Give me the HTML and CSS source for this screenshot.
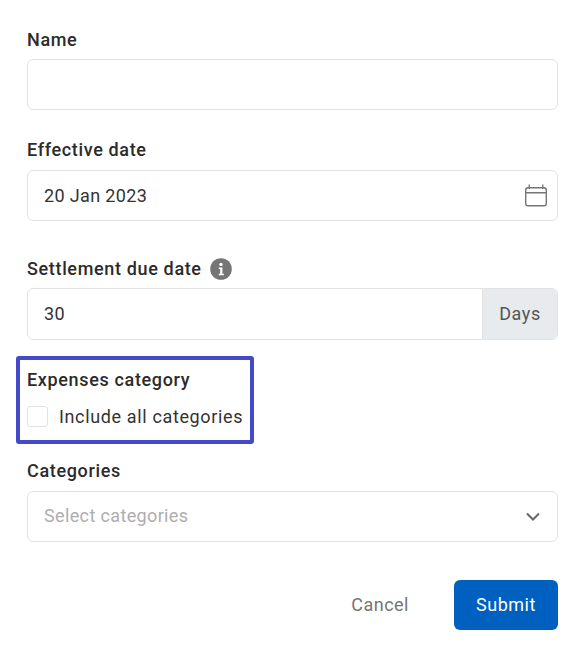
FILE: index.html
```html
<!DOCTYPE html>
<html lang="en">

<head>
    <meta charset="UTF-8">
    <meta name="viewport" content="width=device-width, initial-scale=1.0">
    <title>Expense policy</title>
    <link rel="stylesheet" href="styles.css">
</head>

<body>
    <form id="form">
        <div class="field name-field">
            <label>Name</label>
            <div class="control"></div>
        </div>

        <div class="field date-field">
            <label>Effective date</label>
            <div class="control">
                <span class="value">20 Jan 2023</span>
                <svg class="calendar" width="24" height="24" viewBox="0 0 24 24" fill="none" stroke="#757575" stroke-width="1.4">
                    <rect x="2.7" y="3.7" width="20.6" height="18.1" rx="2.2"></rect>
                    <path d="M2.7 8.8h20.6M6.3 0.5v4.5M19.7 0.5v4.5"></path>
                </svg>
            </div>
        </div>

        <div class="field due-field">
            <label>Settlement due date
                <svg class="info" width="22" height="22" viewBox="0 0 22 22">
                    <circle cx="11" cy="11" r="10.8" fill="#757575"></circle>
                    <circle cx="11" cy="6.4" r="1.7" fill="#fff"></circle>
                    <path d="M8.8 9.4h3.6v6.4h1.4v1.5H8.8v-1.5h1.4v-4.9H8.8z" fill="#fff"></path>
                </svg>
            </label>
            <div class="control with-addon">
                <span class="value">30</span>
                <span class="addon">Days</span>
            </div>
        </div>

        <!-- highlighted section -->
        <div class="highlight">
            <label>Expenses category</label>
            <div class="check-row">
                <span class="checkbox"></span>
                <span>Include all categories</span>
            </div>
        </div>

        <div class="field categories-field">
            <label>Categories</label>
            <div class="control">
                <span class="placeholder">Select categories</span>
                <svg class="chevron" width="16" height="10" viewBox="0 0 16 10" fill="none" stroke="#666" stroke-width="2">
                    <path d="M2 1.5l6 6 6-6"></path>
                </svg>
            </div>
        </div>

        <div class="actions">
            <button type="button" class="cancel">Cancel</button>
            <button type="button" class="submit">Submit</button>
        </div>
    </form>
</body>

</html>
```

FILE: styles.css
```css
* {
    margin: 0;
    padding: 0;
    box-sizing: border-box;
    font-family: Roboto, sans-serif;
}

body {
    background-color: white;
    color: #333;
    font-size: 18px;
    letter-spacing: 0.36px;
}

#form {
    width: 531px;
    margin-left: 27px;
    padding-top: 28px;
}

label {
    display: flex;
    align-items: center;
    gap: 8px;
    height: 24px;
    font-size: 18px;
    font-weight: 500;
    line-height: 24px;
    letter-spacing: 0.65px;
    color: #2b2b2b;
}

.control {
    display: flex;
    align-items: center;
    justify-content: space-between;
    height: 51px;
    margin-top: 7px;
    padding: 0 10px 0 16px;
    border: 1px solid #e2e2e2;
    border-radius: 6px;
}

.date-field {
    margin-top: 28px;
}

.date-field .control {
    margin-top: 8px;
}

.calendar {
    display: block;
}

.due-field {
    margin-top: 36px;
}

.with-addon {
    height: 52px;
    padding: 0 0 0 16px;
    margin-top: 7px;
    overflow: hidden;
}

.with-addon .value {
    margin-bottom: 2px;
}

.addon {
    display: flex;
    align-items: center;
    justify-content: center;
    width: 75px;
    height: 100%;
    padding-bottom: 2px;
    background-color: #e8ebee;
    border-left: 1px solid #e2e2e2;
    color: #555;
    letter-spacing: 0.6px;
}

.highlight {
    width: 238px;
    height: 88px;
    margin-top: 16px;
    margin-left: -11px;
    padding: 8px 0 0 7px;
    border: 4px solid #4349c9;
    border-radius: 3px;
}

.check-row {
    display: flex;
    align-items: center;
    gap: 11px;
    margin-top: 14px;
    letter-spacing: 0.64px;
    color: #333;
}

.checkbox {
    flex-shrink: 0;
    width: 21px;
    height: 21px;
    border: 1px solid #e2e2e2;
    border-radius: 3px;
}

.categories-field {
    margin-top: 15px;
}

.categories-field .control {
    margin-top: 8px;
    padding-right: 16px;
}

.placeholder {
    margin-bottom: 2px;
    color: #aeaeae;
}

.actions {
    display: flex;
    justify-content: flex-end;
    align-items: center;
    gap: 45px;
    margin-top: 38px;
}

button {
    border: none;
    background: none;
    cursor: pointer;
    font-size: 18px;
    padding-bottom: 2px;
}

.cancel {
    color: #757575;
    letter-spacing: 0.5px;
}

.submit {
    width: 104px;
    height: 50px;
    border-radius: 6px;
    background-color: #0060c0;
    color: white;
    letter-spacing: 0.5px;
}
```
